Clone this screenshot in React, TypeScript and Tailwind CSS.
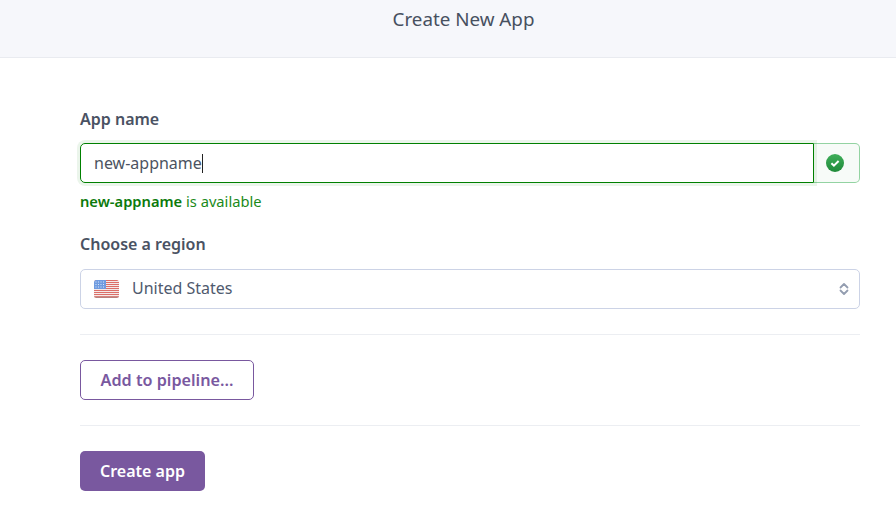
function UsFlag() {
  const stripes = [0, 1, 2, 3, 4, 5, 6, 7, 8];
  return (
    <svg width="25" height="18" viewBox="0 0 25 18" className="block">
      <defs>
        <clipPath id="flag-clip">
          <rect x="0" y="0" width="25" height="18" rx="2.5" />
        </clipPath>
      </defs>
      <g clipPath="url(#flag-clip)">
        <rect width="25" height="18" fill="#f4e9e8" />
        {stripes.map((i) => (
          <rect key={i} x="0" y={i * 2} width="25" height="1" fill={i === 8 ? '#d9837d' : '#dc6e68'} />
        ))}
        <rect x="0" y="17" width="25" height="1" fill="#b9827f" />
        <rect x="0" y="0" width="12" height="9" fill="#6f9be0" />
        {[2, 4.5, 7].map((y) =>
          [2, 4.5, 7, 9.5].map((x) => <rect key={`${x}-${y}`} x={x - 0.5} y={y - 0.5} width="1" height="1" fill="#dbe6f7" />)
        )}
      </g>
    </svg>
  );
}

export default function App() {
  return (
    <div className="min-h-[526px] bg-white font-['Noto_Sans',sans-serif] text-[#3f4a5c]">
      <header className="h-[58px] bg-[#f6f7fb] border-b border-[#e9ebf0] flex justify-center pt-[6px] pl-[31px]">
        <h1 className="text-[18.8px] leading-[26px] text-[#47505f]">Create New App</h1>
      </header>

      <main className="pl-[80px] pr-[36px] pt-[51px]">
        <label className="block text-[16px] leading-5 font-semibold text-[#4a5263]">App name</label>

        <div className="flex mt-[14px] h-10">
          <div className="relative flex-1 flex items-center pl-[13px] border border-[#008000] rounded-l-[5px] shadow-[0_0_0_3px_rgba(0,128,0,0.08)]">
            <span className="text-[16px] leading-5 text-[#4c5361]">new-appname</span>
            <span className="w-px h-[19px] bg-[#222]" />
          </div>
          <div className="w-[46px] flex items-center justify-center pr-[3px] bg-[#f7fbf8] border border-l-0 border-[#93d3a2] rounded-r-[5px]">
            <svg width="18" height="18" viewBox="0 0 18 18">
              <defs>
                <linearGradient id="ok-fill" x1="0" y1="0" x2="0" y2="1">
                  <stop offset="0" stopColor="#3fae5a" />
                  <stop offset="1" stopColor="#1f8a3a" />
                </linearGradient>
              </defs>
              <circle cx="9" cy="9" r="9" fill="url(#ok-fill)" />
              <path d="M5.4 9.3 L7.9 11.6 L12.6 7" fill="none" stroke="#fff" strokeWidth="2" />
            </svg>
          </div>
        </div>

        <p className="mt-[8px] text-[14.7px] leading-5 text-[#1a8a1a]">
          <span className="font-semibold text-[#0b7a0b]">new-appname</span> is available
        </p>

        <label className="block mt-[23px] text-[16px] leading-5 font-semibold text-[#4a5263]">Choose a region</label>

        <div className="mt-[15px] h-10 flex items-center pl-[13px] pr-[9px] border border-[#ccd3e6] rounded-[5px]">
          <UsFlag />
          <span className="ml-[13px] text-[16px] leading-5 -translate-y-px text-[#4f5a6e]">United States</span>
          <svg width="12" height="16" viewBox="0 0 12 16" className="ml-auto" fill="none" stroke="#939db0" strokeWidth="1.8" strokeLinecap="round" strokeLinejoin="round">
            <path d="M2.5 6.5 L6 3 L9.5 6.5" />
            <path d="M2.5 9.5 L6 13 L9.5 9.5" />
          </svg>
        </div>

        <div className="mt-[25px] border-t border-[#eceef2]" />

        <button className="block mt-[25px] h-10 w-[174px] border border-[#79589f] rounded-[5px] text-[16.2px] font-semibold text-[#79589f] bg-white">
          Add to pipeline...
        </button>

        <div className="mt-[25px] border-t border-[#eceef2]" />

        <button className="block mt-[25px] h-10 w-[125px] rounded-[5px] text-[16px] font-semibold text-white bg-[#79589f]">
          Create app
        </button>
      </main>
    </div>
  );
}
